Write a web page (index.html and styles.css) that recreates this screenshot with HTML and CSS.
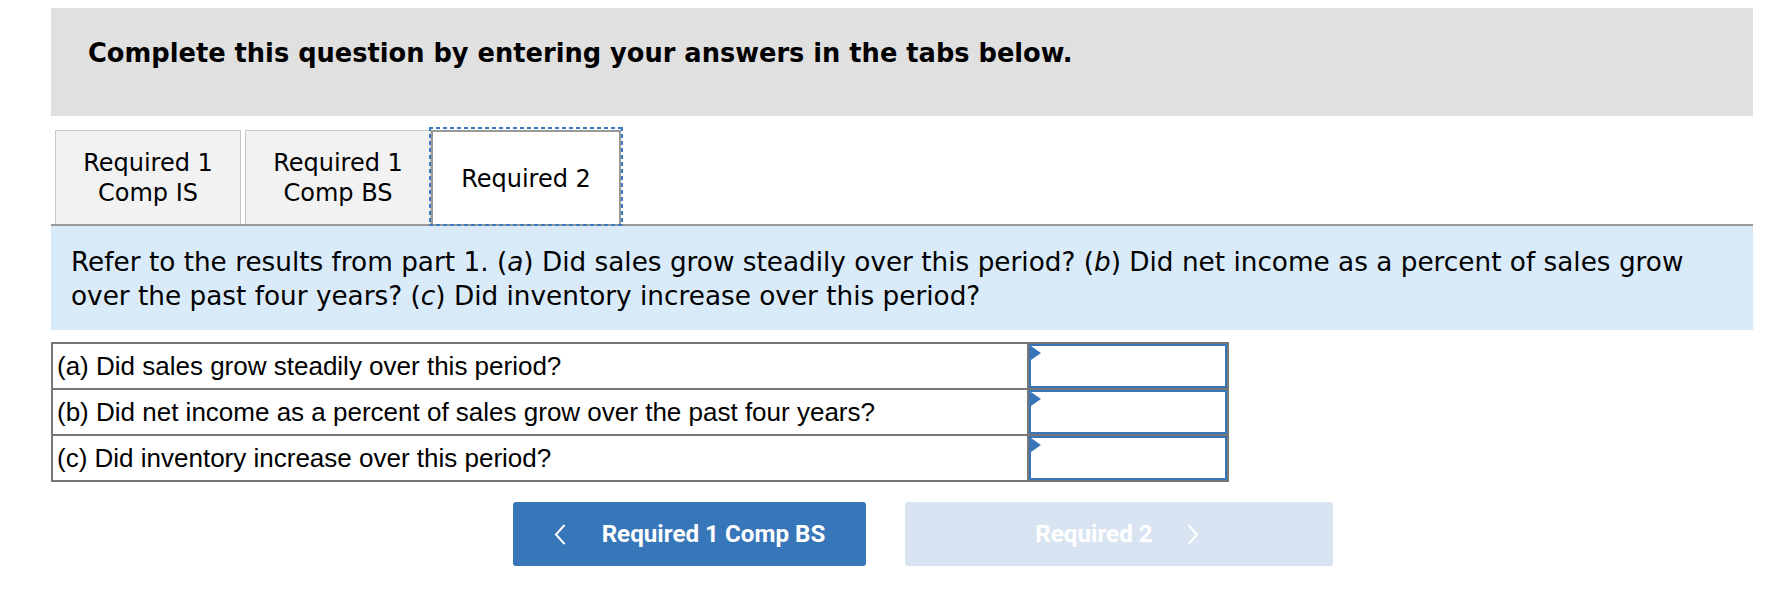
FILE: index.html
```html
<!DOCTYPE html>
<html lang="en">
<head>
<meta charset="utf-8">
<title>Required 2</title>
<link rel="stylesheet" href="styles.css">
</head>
<body>
<div class="page">
  <div class="header">
    <h1 class="title">Complete this question by entering your answers in the tabs below.</h1>
  </div>
  <div class="tabs">
    <div class="tab">Required 1<br>Comp IS</div>
    <div class="tab">Required 1<br>Comp BS</div>
    <div class="tab active">Required 2</div>
  </div>
  <div class="prompt">Refer to the results from part 1. (<i>a</i>) Did sales grow steadily over this period? (<i>b</i>) Did net income as a percent of sales grow over the past four years? (<i>c</i>) Did inventory increase over this period?</div>
  <table class="answers">
    <tr>
      <td class="q">(a) Did sales grow steadily over this period?</td>
      <td class="a"><div class="box"></div></td>
    </tr>
    <tr>
      <td class="q">(b) Did net income as a percent of sales grow over the past four years?</td>
      <td class="a"><div class="box"></div></td>
    </tr>
    <tr>
      <td class="q">(c) Did inventory increase over this period?</td>
      <td class="a"><div class="box"></div></td>
    </tr>
  </table>
  <div class="nav">
    <button class="btn prev">
      <svg class="chev" width="12" height="21" viewBox="0 0 12 21"><polyline points="10.5,1 2,10.5 10.5,20" fill="none" stroke="#fff" stroke-width="2"/></svg>
      <span>Required 1 Comp BS</span>
    </button>
    <button class="btn next">
      <span>Required 2</span>
      <svg class="chev" width="12" height="21" viewBox="0 0 12 21"><polyline points="1.5,1 10,10.5 1.5,20" fill="none" stroke="#fff" stroke-width="2"/></svg>
    </button>
  </div>
</div>
</body>
</html>
```
FILE: styles.css
```css
body {
  margin: 0;
  background: #ffffff;
}
.page {
  margin-left: 51px;
  width: 1702px;
  padding-top: 8px;
}
.header {
  box-sizing: border-box;
  height: 108px;
  background: #e0e0e0;
  padding: 32px 0 0 37px;
}
.title {
  margin: 0;
  font: bold 25.7px/26px "DejaVu Sans", Verdana, sans-serif;
  color: #000;
}
.tabs {
  display: flex;
  margin-top: 14px;
  padding-left: 4px;
  border-bottom: 2px solid #999999;
}
.tab {
  box-sizing: border-box;
  width: 186px;
  height: 94px;
  margin-right: 4px;
  display: flex;
  align-items: center;
  justify-content: center;
  text-align: center;
  background: #f2f2f2;
  border: 1px solid #c8c8c8;
  border-bottom: none;
  font: 24px/30px "DejaVu Sans", Verdana, sans-serif;
  color: #000;
  padding-top: 1px;
}
.tab:nth-child(2) {
  margin-right: 0;
}
.tab.active {
  position: relative;
  width: 190px;
  background: #ffffff;
  border: 2px solid #999999;
  border-bottom: none;
  padding-top: 2px;
}
.tab.active::after {
  content: "";
  position: absolute;
  top: -5px;
  left: -4px;
  right: -4px;
  bottom: -2px;
  background:
    repeating-linear-gradient(90deg, #3a78c0 0 4px, transparent 4px 7px) top / 100% 2px no-repeat,
    repeating-linear-gradient(90deg, #3a78c0 0 4px, transparent 4px 7px) bottom / 100% 2px no-repeat,
    repeating-linear-gradient(180deg, #3a78c0 0 4px, transparent 4px 7px) left / 2px 100% no-repeat,
    repeating-linear-gradient(180deg, #3a78c0 0 4px, transparent 4px 7px) right / 2px 100% no-repeat;
}
.prompt {
  background: #d9eaf8;
  padding: 19px 20px 17px;
  font: 26.3px/34px "DejaVu Sans", Verdana, sans-serif;
  color: #000;
}
.answers {
  margin-top: 12px;
  width: 1178px;
  border-collapse: collapse;
}
.answers td {
  border: 2px solid #777777;
  height: 44px;
  padding: 0;
}
.answers td.q {
  padding: 0 4px;
  font: 26px "Liberation Sans", Arial, sans-serif;
  color: #000;
}
.answers td.a {
  width: 198px;
}
.box {
  box-sizing: border-box;
  height: 44px;
  border: 2px solid #3a75b8;
  position: relative;
}
.box::before {
  content: "";
  position: absolute;
  left: 0;
  top: 0;
  border-left: 10px solid #3a75b8;
  border-top: 7px solid transparent;
  border-bottom: 7px solid transparent;
}
.nav {
  display: flex;
  gap: 39px;
  margin-top: 20px;
  padding-left: 462px;
}
.btn {
  box-sizing: border-box;
  height: 64px;
  border: none;
  border-radius: 3px;
  display: flex;
  align-items: center;
  justify-content: center;
  gap: 36px;
  font: bold 24.2px "Roboto", "Liberation Sans", sans-serif;
  color: #ffffff;
  padding: 0;
}
.btn.prev {
  width: 353px;
  background: #3776b8;
}
.btn.next {
  width: 428px;
  background: #d8e4f1;
  gap: 34px;
  padding-right: 4px;
}
.chev {
  display: block;
}
```
